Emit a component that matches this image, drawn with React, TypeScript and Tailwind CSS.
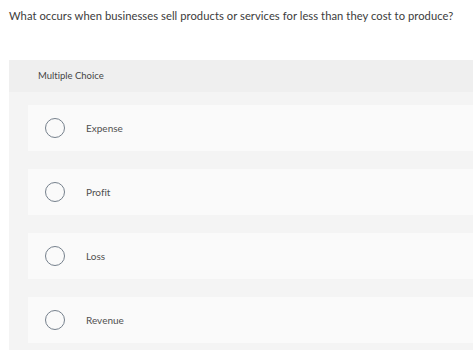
const options = ["Expense", "Profit", "Loss", "Revenue"];

export default function App() {
  return (
    <div className="h-[353px] w-[474px] bg-white font-['Lato',sans-serif] text-[#333] [font-variant-ligatures:none]">
      {/* Question */}
      <p className="pl-[9px] pt-[9px] text-[11.2px] leading-[14px] tracking-[0.06px] text-[#3c3c3c]">
        What occurs when businesses sell products or services for less than they cost to produce?
      </p>

      {/* Answer panel */}
      <div className="ml-[9px] mr-[1px] mt-[37px] bg-[#f4f4f4] pb-[7px]">
        <div className="flex h-[32px] items-center bg-[#efefef] pl-[29px] text-[9.5px] text-[#454545]">
          Multiple Choice
        </div>
        <div className="flex flex-col gap-[18px] pl-[19px] pt-[13px]">
          {options.map((o) => (
            <div key={o} className="flex h-[46px] items-center bg-[#fafafa] pl-[17px]">
              <span className="h-[20px] w-[20px] rounded-full border border-[#75808c]" />
              <span className="ml-[21px] pt-[1px] text-[10px] text-[#505050]">{o}</span>
            </div>
          ))}
        </div>
      </div>
    </div>
  );
}
